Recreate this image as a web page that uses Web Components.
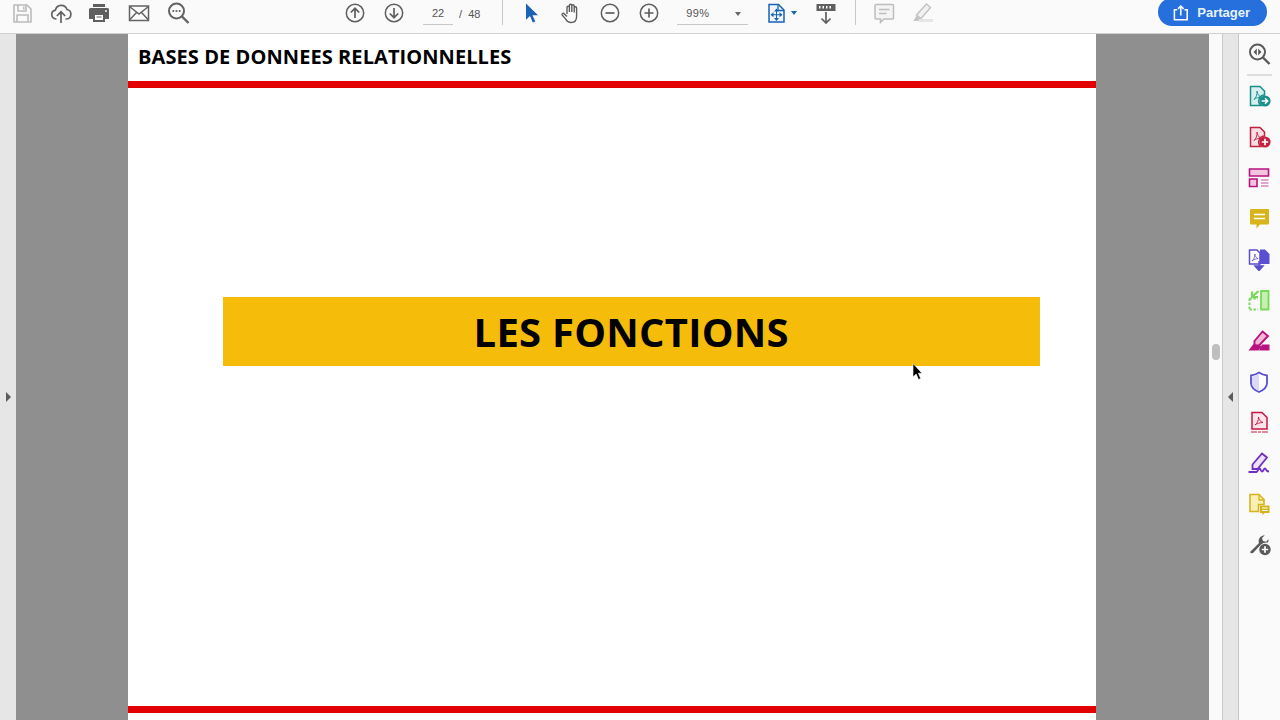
<!doctype html>
<html lang="fr">
<head>
<meta charset="utf-8">
<title>BASES DE DONNEES RELATIONNELLES</title>
<style>
    html, body { margin: 0; height: 100%; overflow: hidden; background: #fff; }
</style>
</head>
<body>
<reader-app>
    <reader-toolbar slot="top"></reader-toolbar>
    <pdf-page slot="page">
        <span slot="title">BASES DE DONNEES RELATIONNELLES</span>
        <section-banner>LES FONCTIONS</section-banner>
    </pdf-page>
    <tool-rail slot="rail"></tool-rail>
</reader-app>

<script>
const ICONS = {
    save: `<g fill="none" stroke="#bcbcbc" stroke-width="1.6"><path d="M4 4h13l4 4v13H4z"/><path d="M8 4v6h8V4M7 21v-7h11v7"/></g><path d="M13 5.500h1.500v3H13z" fill="#bcbcbc"/>`,
    upload: `<g fill="none" stroke="#636363" stroke-width="1.700"><path d="M7.500 18H7a4.500 4.500 0 0 1-.6-8.900A6 6 0 0 1 18 8.500a4.800 4.800 0 0 1-.5 9.500H16.500"/><path d="M12 22V11M7.800 15l4.200-4.200 4.200 4.200"/></g>`,
    print: `<path d="M6 6V3h12v3z M3.500 7h17A1.500 1.500 0 0 1 22 8.500V18h-4v3H6v-3H2V8.500A1.500 1.500 0 0 1 3.500 7z" fill="#5f5f5f"/><path d="M8 14h8v5H8z" fill="#fff"/><path d="M9.500 15.500h5v1h-5z" fill="#5f5f5f"/><circle cx="19" cy="10" r=".9" fill="#fff"/>`,
    mail: `<g fill="none" stroke="#636363" stroke-width="1.500"><path d="M2.500 5h19v14.500h-19z"/><path d="M2.500 5.500 12 13l9.500-7.500M2.500 19l7-7.500M21.500 19l-7-7.500"/></g>`,
    find: `<g fill="none" stroke="#636363" stroke-width="2"><circle cx="10.500" cy="10" r="7.500"/><path d="m16 15.500 6.500 6.500" stroke-width="2.400"/></g><g fill="#636363"><circle cx="7.300" cy="10" r="1.100"/><circle cx="10.500" cy="10" r="1.100"/><circle cx="13.700" cy="10" r="1.100"/></g>`,
    up: `<g fill="none" stroke="#5f5f5f" stroke-width="1.500"><circle cx="12" cy="12" r="8.700"/><path d="M12 17V7.500M7.800 11.500 12 7.300l4.200 4.200" stroke-width="1.700"/></g>`,
    down: `<g fill="none" stroke="#5f5f5f" stroke-width="1.500"><circle cx="12" cy="12" r="8.700"/><path d="M12 7v9.500M7.800 12.500l4.200 4.200 4.200-4.200" stroke-width="1.700"/></g>`,
    arrow: `<path d="M7 2.500v16.200l4-3.700 2.800 6.500 2.500-1-2.800-6.300H19z" fill="#1b63b5"/>`,
    hand: `<path d="M8 13V6.500a1.200 1.200 0 0 1 2.400 0V11m0 0V4.500a1.200 1.200 0 0 1 2.400 0V11m0 0V5a1.200 1.200 0 0 1 2.400 0v6m0 .5V7a1.200 1.200 0 0 1 2.400 0v8.500c0 3.500-2 6-5.500 6-3 0-4.200-1.200-5.400-3.400L3.200 14c-.7-1.300 1-2.300 2-1.300L8 15.500" fill="none" stroke="#5f5f5f" stroke-width="1.400" stroke-linejoin="round"/>`,
    minus: `<g fill="none" stroke="#5f5f5f" stroke-width="1.500"><circle cx="12" cy="12" r="8.700"/><path d="M7.500 12h9" stroke-width="1.700"/></g>`,
    plus: `<g fill="none" stroke="#5f5f5f" stroke-width="1.500"><circle cx="12" cy="12" r="8.700"/><path d="M7.500 12h9M12 7.500v9" stroke-width="1.700"/></g>`,
    fit: `<path d="M5 3.500h9.500L20 9v12H5z" fill="#eef4fb" stroke="#1b63b5" stroke-width="1.500"/><path d="M14 3.500V9.500h6" fill="none" stroke="#1b63b5" stroke-width="1.300"/><g fill="#1b63b5"><path d="M12.500 7.500 15 10.500h-5zM12.500 20 10 17h5zM6.500 13.700l3-2.400v5zM18.500 13.700l-3-2.400v5z"/><path d="M12 10h1v7.500h-1zM9 13.200h7v1H9z"/></g>`,
    readout: `<path d="M2.500 3h19v7h-19z" fill="#5f5f5f"/><g fill="#fff"><path d="M5 5h1.500v2.500H5zM8.500 5H10v2.500H8.500zM12 5h1.500v2.500H12zM15.500 5H17v2.500h-1.500z"/></g><path d="M12 11v11M7.500 17.500 12 22l4.500-4.500" fill="none" stroke="#5f5f5f" stroke-width="1.700"/>`,
    comment: `<path d="M4 3.500h16.500a1 1 0 0 1 1 1V17a1 1 0 0 1-1 1H12l-3.500 3.500V18H4a1 1 0 0 1-1-1V4.500a1 1 0 0 1 1-1z" fill="#f4f4f4" stroke="#bdbdbd" stroke-width="1.500"/><path d="M7 8.500h10.500M7 12.500h7.500" stroke="#bdbdbd" stroke-width="1.500"/>`,
    marker: `<path d="m15.500 3 4 3.500-9.500 11-4.500-3.500z" fill="#f2f2f2" stroke="#c4c4c4" stroke-width="1.500"/><path d="m5.500 14.500 4 3L7 20H2.500z" fill="#c4c4c4"/><path d="M9 18h13v3H7z" fill="#e6e6e6"/>`,
    share: `<path d="M7.500 8H4v12.500h16V8h-3.500M12 15V3.500M8.500 6.800 12 3.300l3.500 3.500" fill="none" stroke="#fff" stroke-width="1.900"/>`,
    search: `<g fill="none" stroke="#5a5a5a" stroke-width="2"><circle cx="10.500" cy="10" r="7.500"/><path d="m16 15.500 6.500 6.500" stroke-width="2.400"/></g><path d="M9.800 6.500v7L6.500 10zM11.200 6.500v7l3.300-3.500z" fill="#5a5a5a"/>`,
    export: `<path d="M3.500 2.500H13l4.500 4.500v4a6 6 0 0 0-3.700 10.500H3.500z" fill="#d9eeee" stroke="#1a8f8c" stroke-width="1.500"/><path d="M7 15.500c2-1.500 3.300-5 3-8.500 .5 3 1.500 5 4 6-2.500 0-5 1-7 2.500z" fill="none" stroke="#1a8f8c" stroke-width=".9"/><circle cx="18" cy="17" r="5.600" fill="#1a8f8c"/><path d="M14.700 17h5.500M18 14.300l2.700 2.700-2.700 2.700" fill="none" stroke="#fff" stroke-width="1.500"/>`,
    create: `<path d="M3.500 2.500H13l4.500 4.500v4a6 6 0 0 0-3.700 10.500H3.500z" fill="#f8dfe3" stroke="#c22240" stroke-width="1.500"/><path d="M7 15.500c2-1.500 3.300-5 3-8.500 .5 3 1.500 5 4 6-2.500 0-5 1-7 2.500z" fill="none" stroke="#c22240" stroke-width=".9"/><circle cx="18" cy="17" r="5.600" fill="#c22240"/><path d="M14.800 17h6.400M18 13.800v6.400" stroke="#fff" stroke-width="1.700"/>`,
    layout: `<path d="M2.500 3h19v7h-19z" fill="#f3c4de" stroke="#b8127f" stroke-width="1.600"/><path d="M2.500 13h7.500v7.500H2.500z" fill="#f3c4de" stroke="#b8127f" stroke-width="1.600"/><path d="M14 14h7.500M14 17h7.500M14 20h7.500" stroke="#c9509f" stroke-width="1.200"/>`,
    note: `<path d="M4 3h17a1 1 0 0 1 1 1v13.500a1 1 0 0 1-1 1h-8l-3.500 4v-4H4a1 1 0 0 1-1-1V4a1 1 0 0 1 1-1z" fill="#d8b41c"/><path d="M7 8.500h11M7 12.500h11" stroke="#fff" stroke-width="1.700"/>`,
    combine: `<path d="M13 2.500h5l4.500 4.500v10H13z" fill="#5a4fd0"/><path d="M2.500 3H10l3 3v11H2.500z" fill="#fff" stroke="#5a4fd0" stroke-width="1.500"/><path d="M5 14c1.800-1.500 3-4 2.800-7 .4 2.200 1.200 3.700 3.200 4.700-2 0-4.200 .8-6 2.300z" fill="none" stroke="#5a4fd0" stroke-width=".8"/><path d="M12 14v6M8 19h8l-4 4.500z" fill="#5a4fd0" stroke="#5a4fd0" stroke-width="1.500"/>`,
    organize: `<path d="M14 3h7.500v18.500H14z" fill="#c6efb0" stroke="#7ad85a" stroke-width="1.800"/><path d="M2.500 10.500h8.500M2.500 21.500h8.500M2.500 10.500v11" fill="none" stroke="#7ad85a" stroke-width="2" stroke-dasharray="2.400 1.600"/><path d="M11.500 3 5.500 8.500M5 3.500v5.500h6" fill="none" stroke="#7ad85a" stroke-width="2.200"/>`,
    redact: `<path d="m15.500 2.500 5.500 4.500-9 9.500H7.500v-4.500z" fill="#f3b6d7" stroke="#b8127f" stroke-width="1.900"/><path d="M6.500 15 1.500 21.500h10l3-4.500zM15 15.500h7.500v6H12z" fill="#b8127f"/>`,
    protect: `<path d="M12 2.500c2.500 1.700 5 2.700 8 3v7.500c0 4-3.300 7-8 9-4.700-2-8-5-8-9V5.500c3-.3 5.500-1.300 8-3z" fill="#fff" stroke="#5a50d2" stroke-width="1.800"/><path d="M12 3.500V21c-4-1.800-7-4.500-7-8V6.500c2.500-.4 5-1.400 7-3z" fill="#dcd9f6"/>`,
    compress: `<path d="M5 2.500h10L20 7.500v11.500H5z" fill="#fbe5ea" stroke="#c7163f" stroke-width="1.500"/><path d="M8 15c2-1.500 3.700-4.500 3.500-8 .5 3 1.700 4.500 4.500 5.500-3 0-5.800 1-8 2.500z" fill="none" stroke="#c7163f" stroke-width=".9"/><path d="M4 22h6M15 22h6M11 22h3" stroke="#c7163f" stroke-width="1.200"/>`,
    sign: `<path d="m15 2.500 5 4-9.500 11.500H5.500v-4.500z" fill="#ece2fa" stroke="#6f2fc2" stroke-width="1.800"/><path d="M1.500 21h8c1 0 1.500-3.500 3-3.500s1 3 2.500 3 1.500-3 3-3 .5 3 4 3" fill="none" stroke="#6f2fc2" stroke-width="1.800"/>`,
    sendnote: `<path d="M3 2.500h9l5 5v5h-5.500v7H3z" fill="#f9f0b8" stroke="#d8b41c" stroke-width="1.600"/><path d="M12 2.500v5.500h5.500" fill="none" stroke="#d8b41c" stroke-width="1.300"/><path d="M13 13.500h9.500v7.500h-5l-2 2.500V21H13z" fill="#d8b41c"/><path d="M15 16h5.500M15 18.500h5.500" stroke="#fff" stroke-width="1.100"/>`,
    tools: `<g transform="translate(0 -1.500)"><path d="M3 20.500 12 11.500c-1.200-3 .6-7.500 5.800-7.800L15 6.500l1 3 3 .7 2.500-2.500c.2 1-.1 2.200-.7 3.300a8 8 0 0 0-7 2.300L6 21.500a2.200 2.200 0 0 1-3-1z" fill="#5a5a5a"/><circle cx="18" cy="18" r="5.700" fill="#5a5a5a"/><path d="M14.800 18h6.400M18 14.800v6.400" stroke="#fff" stroke-width="1.700"/></g>`
}

customElements.define(
    'tool-icon',
    class extends HTMLElement {
        constructor() {
            super()
            this.attachShadow({ mode: 'open' })
        }

        connectedCallback() {
            this.shadowRoot.innerHTML = `
                <style>
                    :host {
                        display: block;
                        flex: none;
                        width: 24px;
                        height: 24px;
                    }
                    svg {
                        display: block;
                    }
                </style>
                <svg width="24" height="24" viewBox="0 0 24 24" aria-hidden="true">${ICONS[this.getAttribute('name')]}</svg>
            `
        }
    }
)

customElements.define(
    'share-button',
    class extends HTMLElement {
        constructor() {
            super()
            this.attachShadow({ mode: 'open' })
            this.shadowRoot.innerHTML = `
                <style>
                    :host {
                        display: flex;
                        align-items: center;
                        box-sizing: border-box;
                        width: 109px;
                        height: 28px;
                        margin-top: -2px;
                        padding-left: 11px;
                        gap: 6px;
                        border-radius: 14px;
                        background: #2570dc;
                        color: #fff;
                        font: bold 13px "Liberation Sans", Arial, sans-serif;
                    }
                    tool-icon {
                        transform: scale(.8);
                        margin-top: 1px;
                        width: 22px;
                    }
                    span {
                        color: #eaf2fd;
                    }
                </style>
                <tool-icon name="share"></tool-icon>
                <span>Partager</span>
            `
        }
    }
)

customElements.define(
    'reader-toolbar',
    class extends HTMLElement {
        constructor() {
            super()
            this.attachShadow({ mode: 'open' })
            this.shadowRoot.innerHTML = `
                <style>
                    :host {
                        display: flex;
                        box-sizing: border-box;
                        height: 34px;
                        padding: 0 0 0 10px;
                        border-bottom: 1px solid #cfcfcf;
                        background: #fafafa;
                        color: #555;
                        font: 11px "Liberation Sans", Arial, sans-serif;
                    }
                    .group {
                        display: flex;
                        gap: 15px;
                        height: 25px;
                        align-items: center;
                    }
                    .divider {
                        flex: none;
                        width: 1px;
                        height: 25px;
                        background: #c8c8c8;
                    }
                    .page-box {
                        box-sizing: border-box;
                        width: 30px;
                        height: 25px;
                        padding-top: 7px;
                        border-bottom: 1px solid #c8c8c8;
                        text-align: center;
                    }
                    .zoom-box {
                        display: flex;
                        justify-content: space-between;
                        box-sizing: border-box;
                        width: 71px;
                        height: 25px;
                        padding: 7px 7px 0 9px;
                        border-bottom: 1px solid #c8c8c8;
                        letter-spacing: .4px;
                    }
                    .caret {
                        display: block;
                        flex: none;
                        width: 0;
                        height: 0;
                        margin-top: 5px;
                        border: 3.500px solid transparent;
                        border-top: 4px solid #666;
                        border-bottom: 0;
                    }
                    .caret.blue {
                        border-top-color: #1b63b5;
                        margin: 1px 0 0 0;
                    }
                </style>
                <div class="group">
                    <tool-icon name="save"></tool-icon>
                    <tool-icon name="upload"></tool-icon>
                    <tool-icon name="print" style="margin-left:-1px;margin-right:1px"></tool-icon>
                    <tool-icon name="mail"></tool-icon>
                    <tool-icon name="find"></tool-icon>
                </div>
                <div class="group" style="margin-left:153px">
                    <tool-icon name="up"></tool-icon>
                    <tool-icon name="down"></tool-icon>
                </div>
                <div class="page-box" style="margin-left:17px">22</div>
                <div style="margin:8px 0 0 6px;white-space:pre">/&nbsp;&nbsp;48</div>
                <div class="divider" style="margin-left:22px"></div>
                <div class="group" style="margin-left:16px;gap:15.300px">
                    <tool-icon name="arrow"></tool-icon>
                    <tool-icon name="hand"></tool-icon>
                    <tool-icon name="minus"></tool-icon>
                    <tool-icon name="plus"></tool-icon>
                </div>
                <div class="zoom-box" style="margin-left:16px"><span>99%</span><i class="caret"></i></div>
                <div class="group" style="margin-left:16px;gap:3px">
                    <tool-icon name="fit"></tool-icon>
                    <i class="caret blue"></i>
                </div>
                <tool-icon name="readout" style="margin:1px 0 0 17px"></tool-icon>
                <div class="divider" style="margin-left:17px"></div>
                <div class="group" style="margin-left:16px">
                    <tool-icon name="comment"></tool-icon>
                    <tool-icon name="marker"></tool-icon>
                </div>
                <share-button style="margin-left:223px"></share-button>
            `
        }
    }
)

customElements.define(
    'section-banner',
    class extends HTMLElement {
        constructor() {
            super()
            this.attachShadow({ mode: 'open' })
            this.shadowRoot.innerHTML = `
                <style>
                    :host {
                        display: block;
                        height: 69px;
                        margin: 209px 56.500px 0 95px;
                        background: #f5bc0a;
                        color: #000;
                        font: bold 40px/69px "Open Sans", sans-serif;
                        letter-spacing: .25px;
                        text-align: center;
                    }
                </style>
                <slot></slot>
            `
        }
    }
)

customElements.define(
    'pdf-page',
    class extends HTMLElement {
        constructor() {
            super()
            this.attachShadow({ mode: 'open' })
            this.shadowRoot.innerHTML = `
                <style>
                    :host {
                        display: flex;
                        flex-direction: column;
                        width: 968px;
                        height: 686px;
                        overflow: hidden;
                        background: #fff;
                    }
                    header {
                        box-sizing: border-box;
                        height: 47px;
                        padding: 8px 0 0 10px;
                        color: #000;
                        font: bold 20px/30px "Open Sans", sans-serif;
                        letter-spacing: .08px;
                    }
                    .rule {
                        flex: none;
                        height: 7px;
                        background: #e20000;
                    }
                    main {
                        flex: none;
                        height: 618px;
                    }
                </style>
                <header><slot name="title"></slot></header>
                <div class="rule"></div>
                <main><slot></slot></main>
                <div class="rule"></div>
            `
        }
    }
)

customElements.define(
    'tool-rail',
    class extends HTMLElement {
        constructor() {
            super()
            this.attachShadow({ mode: 'open' })
            const names = ['export', 'create', 'layout', 'note', 'combine', 'organize', 'redact', 'protect', 'compress', 'sign', 'sendnote', 'tools']
            this.shadowRoot.innerHTML = `
                <style>
                    :host {
                        display: flex;
                        flex-direction: column;
                        align-items: center;
                        box-sizing: border-box;
                        width: 42px;
                        padding: 8px 1px 0 0;
                        border-left: 1px solid #c8c8c8;
                        background: #fafafa;
                    }
                    .sep {
                        flex: none;
                        width: 25px;
                        height: 2px;
                        margin: 8px 0 8px;
                        background: #dedede;
                    }
                    tool-icon {
                        margin-bottom: 16.800px;
                    }
                    .first {
                        margin: 0;
                    }
                </style>
                <tool-icon class="first" name="search"></tool-icon>
                <div class="sep"></div>
                ${names.map(n => `<tool-icon name="${n}"></tool-icon>`).join('')}
            `
        }
    }
)

customElements.define(
    'reader-app',
    class extends HTMLElement {
        constructor() {
            super()
            this.attachShadow({ mode: 'open' })
            this.shadowRoot.innerHTML = `
                <style>
                    :host {
                        display: flex;
                        flex-direction: column;
                        position: relative;
                        width: 1280px;
                        height: 720px;
                        overflow: hidden;
                    }
                    .body {
                        display: flex;
                        flex: 1;
                        min-height: 0;
                    }
                    .collapse {
                        display: flex;
                        flex: none;
                        align-items: center;
                        justify-content: center;
                        width: 16px;
                        padding-top: 40px;
                        box-sizing: border-box;
                        background: #e6e6e6;
                    }
                    .tri {
                        width: 0;
                        height: 0;
                        border-style: solid;
                        border-width: 5px 0 5px 5px;
                        border-color: transparent transparent transparent #5c5c5c;
                    }
                    .tri.back {
                        border-width: 5px 5px 5px 0;
                        border-color: transparent #5c5c5c transparent transparent;
                    }
                    .viewer {
                        flex: none;
                        width: 1193px;
                        padding-left: 112px;
                        box-sizing: border-box;
                        background: #8f8f8f;
                    }
                    .scroll {
                        flex: none;
                        width: 13px;
                        box-sizing: border-box;
                        padding: 310px 2px 0 3px;
                        background: #fafafa;
                    }
                    .thumb {
                        height: 16px;
                        border-radius: 4px;
                        background: #bfbfbf;
                    }
                    .right-collapse {
                        border-left: 1px solid #cacaca;
                    }
                    .cursor {
                        position: absolute;
                        left: 912px;
                        top: 363px;
                    }
                </style>
                <slot name="top"></slot>
                <div class="body">
                    <div class="collapse"><i class="tri"></i></div>
                    <div class="viewer"><slot name="page"></slot></div>
                    <div class="scroll"><div class="thumb"></div></div>
                    <div class="collapse right-collapse"><i class="tri back"></i></div>
                    <slot name="rail"></slot>
                </div>
                <svg class="cursor" width="12" height="18" viewBox="0 0 12 18"><path d="M1 .5V14l3.200-3 2.300 5.500 2.200-1-2.300-5.300H10z" fill="#000" stroke="#fff" stroke-width=".6"/></svg>
            `
        }
    }
)
</script>
</body>
</html>
